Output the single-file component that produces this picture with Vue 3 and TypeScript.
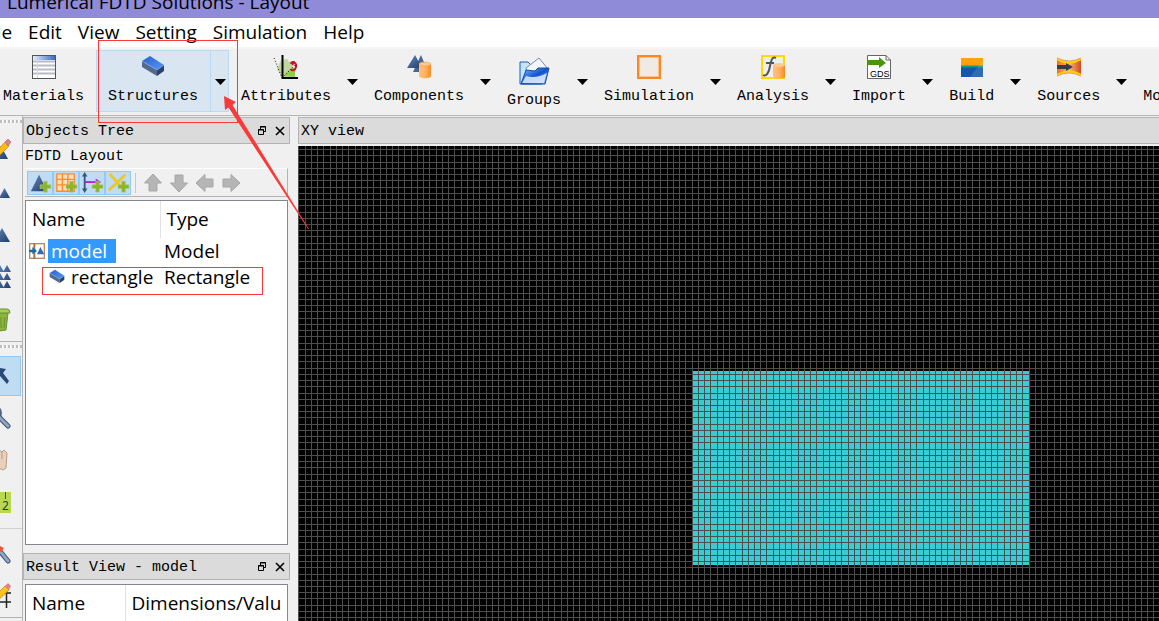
<script setup lang="ts">
interface Tool {
  label: string
  icon: string
  menu: boolean
  active?: boolean
  large?: boolean
}

const menus: string[] = ['File', 'Edit', 'View', 'Setting', 'Simulation', 'Help']

const tools: Tool[] = [
  { label: 'Materials', icon: 'materials', menu: false },
  { label: 'Structures', icon: 'block', menu: true, active: true },
  { label: 'Attributes', icon: 'attributes', menu: true },
  { label: 'Components', icon: 'components', menu: true },
  { label: 'Groups', icon: 'groups', menu: true, large: true },
  { label: 'Simulation', icon: 'simulation', menu: true },
  { label: 'Analysis', icon: 'analysis', menu: true },
  { label: 'Import', icon: 'import', menu: true },
  { label: 'Build', icon: 'build', menu: true },
  { label: 'Sources', icon: 'sources', menu: true },
  { label: 'Monitors', icon: 'simulation', menu: true },
]

const editTools = ['pencil', 'triSmall', 'triLarge', 'array', 'trash']
const viewTools = ['cursor', 'magnifier', 'hand', 'ruler']
const extraTools = ['wand', 'gridEdit']
const addTools = ['addStructure', 'addRegion', 'addMonitor', 'addSource']
const moveTools = [
  { label: 'Move up', turn: 0 },
  { label: 'Move down', turn: 180 },
  { label: 'Move left', turn: 270 },
  { label: 'Move right', turn: 90 },
]

const plus = '<path d="M16 10h4v4h4v4h-4v4h-4v-4h-4v-4h4z" fill="#8db52c" stroke="#b7c97a" stroke-width=".6"/>'

const icons: Record<string, string> = {
  materials:
    '<rect x=".5" y=".5" width="23" height="23" fill="#fff" stroke="#555"/><rect x="1" y="1" width="22" height="4" fill="url(#g-head)"/><path d="M1 6.5h22M1 10.5h22M1 14.5h22M1 18.5h22" stroke="#b9bac8" stroke-width="2"/><path d="M5.5 5v18" stroke="#d5d5df"/>',
  block:
    '<path d="M1 6L9 1 23 10 16 15z" fill="url(#g-blue)"/><path d="M1 6L16 15V21L1 12z" fill="#53688d"/><path d="M16 15L23 10V16L16 21z" fill="#28436e"/><path d="M1 6L16 15L23 10" fill="none" stroke="#8eaad7" stroke-width=".7"/>',
  attributes:
    '<path d="M7 5L13 4 18 10 20 22H8L3 14z" fill="#c2d69c"/><path d="M10 21C14 15 17 12 21 13V22z" fill="#8bcf4c"/><path d="M0 3L8 23L21 10" fill="none" stroke="#111" stroke-dasharray="1 2"/><path d="M8.5 0V23H24" fill="none" stroke="#000" stroke-width="2"/><path d="M17 9C18 5 23 8 22 12C21 16 18 16 17 14" fill="none" stroke="#c51423" stroke-width="2"/><path d="M16 7l5-1-2 5z" fill="#c51423"/>',
  components:
    '<path d="M14 0L21 17H6z" fill="#48658f"/><path d="M8 0L15 13H0z" fill="url(#g-tri)"/><path d="M12 9V21C12 24 24 24 24 21V9z" fill="url(#g-orange)"/><ellipse cx="18" cy="9" rx="6" ry="2" fill="#ffc890" stroke="#e6944b" stroke-width=".5"/>',
  groups:
    '<path d="M2 5H10L13 8H23L24 27H2z" fill="#c5e6ff" stroke="#1e5bb2"/><path d="M8 11L21 1 30 12 26 22H9z" fill="#f3f6ff" stroke="#7588b7"/><path d="M8 13L17 14 20 11H31L27 27H3z" fill="url(#g-folder)" stroke="#174ca8"/><path d="M8 19Q18 22 29 16L26 26H4z" fill="#e2f2ff" opacity=".85"/>',
  simulation:
    '<rect x="1" y="1" width="22" height="22" fill="#f0e9e4" stroke="#ff871f" stroke-width="2"/><rect x="2.5" y="2.5" width="19" height="19" fill="none" stroke="#ffc08b"/>',
  analysis:
    '<rect x="1" y="1" width="22" height="22" fill="#eee" stroke="#ffd900" stroke-width="2"/><path d="M15 3C11 1 10 6 9 11C8 18 5 22 2 20M5 8H13" fill="none" stroke="#555" stroke-width="2"/><path d="M12 10V22C12 24 24 24 24 22V10z" fill="url(#g-orange)"/><ellipse cx="18" cy="10" rx="6" ry="2" fill="#ffc890"/>',
  import:
    '<path d="M.5.5H19L23.5 5V23.5H.5z" fill="#fff" stroke="#666"/><path d="M19 .5V5H23.5" fill="none" stroke="#666"/><path d="M0 5H12V2L19 8 12 13V10H0z" fill="#45970b"/><text x="3" y="22" font-family="Liberation Sans, sans-serif" font-size="9" fill="#000">GDS</text>',
  build:
    '<path d="M1 3H23V11H1z" fill="#ffa00e"/><path d="M1 11H23V22H1z" fill="#1457aa"/><path d="M1 11.5H23" stroke="#0a9a87" stroke-width="2"/><path d="M23 5V22H10z" fill="#fff" opacity=".12"/>',
  sources:
    '<path d="M0 4Q12 10 24 4V20Q12 14 0 20z" fill="url(#g-source)"/><path d="M0 4Q12 11 24 4M0 20Q12 13 24 20" fill="none" stroke="#ffd400" stroke-width="2.500"/><path d="M0 3Q12 9 24 3M0 21Q12 15 24 21" fill="none" stroke="#dd785a" stroke-width=".7"/><path d="M0 10H9V8L16 12 9 16V14H0z" fill="#333e4a"/>',
  pencil:
    '<path d="M14 7L21 20H5z" fill="url(#g-tri)"/><path d="M5 17L18 3 22 7 9 20 4 21z" fill="#ffbd12" stroke="#c08a18" stroke-width=".7"/><path d="M18 3L21 0 24 3 21 7z" fill="#e47e91" stroke="#b7576c" stroke-width=".6"/>',
  triSmall: '<path d="M17.500 7L23 17H12z" fill="url(#g-tri)"/>',
  triLarge: '<path d="M15 5L23 19H7z" fill="url(#g-tri)"/>',
  array:
    '<g fill="url(#g-tri)"><path d="M13 0l4 7H9zM20 0l4 7h-8zM13 8l4 7H9zM20 8l4 7h-8zM13 16l4 7H9zM20 16l4 7h-8z"/></g>',
  trash:
    '<path d="M4 6H21L19 23Q12 25 6 23z" fill="#8db53d" stroke="#6b932c"/><path d="M2 2H20Q23 2 23 6H2z" fill="#a7ce5c" stroke="#6b932c"/><path d="M14 10V21M18 10L17 21" stroke="#688f2a"/>',
  cursor: '<path d="M8 3L19 5 16 9 22 17 20 20 13 12 10 15z" fill="#294a76"/>',
  magnifier:
    '<circle cx="7" cy="7" r="7" fill="#dbe7f5" stroke="#536887" stroke-width="2"/><path d="M12 11L21 20" stroke="#3e5272" stroke-width="5" stroke-linecap="round"/><path d="M12 11L21 20" stroke="#92a6c3" stroke-width="3" stroke-linecap="round"/>',
  hand: '<path d="M8 6L12 2 15 4 17 2 20 5 19 20 16 22 7 18z" fill="#e8d0bb" stroke="#b59d8b"/><path d="M15 4V11" stroke="#b59d8b"/>',
  ruler:
    '<rect x="0" y="2" width="24" height="21" fill="#bad750"/><path d="M18.500 2V9" stroke="#365056"/><text x="15" y="20" font-family="Noto Sans, sans-serif" font-size="12" fill="#263f49">2</text>',
  wand: '<path d="M12 7L21 18" stroke="#3e5272" stroke-width="5" stroke-linecap="round"/><path d="M12 7L21 18" stroke="#92a6c3" stroke-width="3" stroke-linecap="round"/><path d="M13 0L13 3 17 5 14 9 9 6z" fill="#ed552c"/>',
  gridEdit:
    '<path d="M6 8H24M6 17H24M10 3V23M19.500 3V23" stroke="#222" stroke-width="1.500"/><path d="M7 12L18 1 22 5 10 16z" fill="#ffc31a" stroke="#c69521"/><path d="M18 1L21-2 24 1 22 5z" fill="#e47e91"/>',
  addStructure: '<path d="M11 3L20 21H2z" fill="url(#g-tri)"/>' + plus,
  addRegion:
    '<path d="M2 2H21V21H2zM2 8H21M2 14H21M8 2V21M14 2V21" fill="#ffe0bd" stroke="#ff8a2a" stroke-width="1.500"/>' + plus,
  addMonitor:
    '<path d="M4 3V20" stroke="#315983" stroke-width="2"/><path d="M4 0l3 5H1zM4 23l3-5H1z" fill="#315983"/><path d="M4 11H17" stroke="#b51ee0" stroke-width="2"/><path d="M16 7l6 4-6 4z" fill="#b51ee0"/>' + plus,
  addSource: '<path d="M3 2L20 21M2 20L20 3" stroke="#e9c928" stroke-width="3"/>' + plus,
  model:
    '<rect x="1" y="1" width="22" height="22" fill="#fff" stroke="#b58b63" stroke-width="2"/><path d="M8 0V24" stroke="#a6754e" stroke-width="3"/><path d="M0 10H5V6L12 12 5 17V14H0z" fill="#176ba5"/><path d="M17 6L23 17H12z" fill="#3769ae"/>',
}

const gridStep = 6.2415
const lineAt = (start: number, index: number): number => Math.floor(start + gridStep * index)

const verticals: string = Array.from({ length: 420 }, (_, i) => `M${lineAt(0.88, i)} 0h1v2400h-1z`).join('')
const horizontals: string = Array.from({ length: 380 }, (_, i) => `M0 ${lineAt(3.61, i)}h2600v1h-2600z`).join('')
</script>

<template>
  <div class="window">
    <svg class="defs" aria-hidden="true">
      <defs>
        <linearGradient id="g-head"><stop stop-color="#e3edff" /><stop offset="1" stop-color="#386dbd" /></linearGradient>
        <linearGradient id="g-blue" x2="1" y2="1"><stop stop-color="#2860c7" /><stop offset="1" stop-color="#5697ff" /></linearGradient>
        <linearGradient id="g-tri" x2="1" y2="1"><stop stop-color="#6489bd" /><stop offset="1" stop-color="#203c6b" /></linearGradient>
        <linearGradient id="g-orange"><stop stop-color="#ffc17c" /><stop offset=".5" stop-color="#ffb366" /><stop offset="1" stop-color="#f58e1d" /></linearGradient>
        <linearGradient id="g-folder" x2="1" y2="1"><stop stop-color="#7ec3ff" /><stop offset=".5" stop-color="#1452cf" /><stop offset="1" stop-color="#6fb5fa" /></linearGradient>
        <linearGradient id="g-source"><stop stop-color="#f26a21" /><stop offset=".5" stop-color="#f9b878" /><stop offset="1" stop-color="#d5481b" /></linearGradient>
      </defs>
    </svg>

    <header class="titlebar"><span>Lumerical FDTD Solutions - Layout</span></header>
    <nav class="menubar">
      <button v-for="m in menus" :key="m" type="button">{{ m }}</button>
    </nav>

    <div class="toolbar">
      <div v-for="t in tools" :key="t.label" class="tool" :class="{ active: t.active, large: t.large }">
        <button type="button" class="main">
          <svg class="icon" :viewBox="t.large ? '0 0 32 30' : '0 0 24 24'" aria-hidden="true" v-html="icons[t.icon]" />
          <span>{{ t.label }}</span>
        </button>
        <button v-if="t.menu" type="button" class="drop" :aria-label="t.label + ' menu'">
          <svg viewBox="0 0 11 6" aria-hidden="true"><path d="M0 0H11L5.500 6z" /></svg>
        </button>
      </div>
    </div>

    <div class="body">
      <aside class="side">
        <div class="grip"></div>
        <div class="group">
          <button v-for="n in editTools" :key="n" type="button" :aria-label="n">
            <svg viewBox="0 0 24 24" aria-hidden="true" v-html="icons[n]" />
          </button>
        </div>
        <div class="grip second"></div>
        <div class="group">
          <button v-for="n in viewTools" :key="n" type="button" :aria-label="n" :class="{ on: n === 'cursor' }">
            <svg viewBox="0 0 24 24" aria-hidden="true" v-html="icons[n]" />
          </button>
        </div>
        <div class="rule"></div>
        <div class="group">
          <button v-for="n in extraTools" :key="n" type="button" :aria-label="n">
            <svg viewBox="0 0 24 24" aria-hidden="true" v-html="icons[n]" />
          </button>
        </div>
        <div class="end"></div>
      </aside>

      <section class="docks">
        <div class="dockhead">
          <h2>Objects Tree</h2>
          <button type="button" aria-label="Float"><svg viewBox="0 0 10 10" aria-hidden="true"><path d="M3.500 3V.500H8.500V5.500H7M1.500 3.500H6.500V8.500H1.500z" /><path d="M3 1H9M1 4H7" /></svg></button>
          <button type="button" aria-label="Close"><svg viewBox="0 0 10 10" aria-hidden="true"><path d="M1 1L9 9M9 1L1 9" stroke-width="1.600" /></svg></button>
        </div>
        <p class="path">FDTD Layout</p>
        <div class="treebar">
          <button v-for="n in addTools" :key="n" type="button" class="add" :aria-label="n">
            <svg viewBox="0 0 24 24" aria-hidden="true" v-html="icons[n]" />
          </button>
          <i class="split"></i>
          <button v-for="a in moveTools" :key="a.label" type="button" class="move" :aria-label="a.label">
            <svg viewBox="0 0 20 20" aria-hidden="true">
              <path :transform="`rotate(${a.turn} 10 10)`" d="M10 1L18.500 10H14V18H6V10H1.500z" fill="#b5b5b5" stroke="#a6a6a6" />
            </svg>
          </button>
        </div>
        <div class="tree">
          <table>
            <thead>
              <tr><th>Name</th><th>Type</th></tr>
            </thead>
            <tbody>
              <tr>
                <td><div class="node"><svg viewBox="0 0 24 24" aria-hidden="true" v-html="icons.model" /><span class="picked">model</span></div></td>
                <td>Model</td>
              </tr>
              <tr class="child">
                <td><div class="node"><svg viewBox="0 0 24 24" aria-hidden="true" v-html="icons.block" /><span>rectangle</span></div></td>
                <td>Rectangle</td>
              </tr>
            </tbody>
          </table>
          <div class="rowmark"></div>
        </div>
        <div class="dockhead">
          <h2>Result View - model</h2>
          <button type="button" aria-label="Float"><svg viewBox="0 0 10 10" aria-hidden="true"><path d="M3.500 3V.500H8.500V5.500H7M1.500 3.500H6.500V8.500H1.500z" /><path d="M3 1H9M1 4H7" /></svg></button>
          <button type="button" aria-label="Close"><svg viewBox="0 0 10 10" aria-hidden="true"><path d="M1 1L9 9M9 1L1 9" stroke-width="1.600" /></svg></button>
        </div>
        <div class="results">
          <table>
            <thead>
              <tr><th>Name</th><th><div class="clip">Dimensions/Value</div></th></tr>
            </thead>
          </table>
        </div>
      </section>

      <main class="view">
        <div class="dockhead"><h2>XY view</h2></div>
        <div class="canvas">
          <svg aria-label="XY view" shape-rendering="crispEdges">
            <rect x="395" y="225" width="336" height="194" fill="#39ccd3" />
            <path :d="verticals" fill="#4e4e4e" />
            <path :d="horizontals" fill="#4e4e4e" />
          </svg>
        </div>
      </main>
    </div>

    <svg class="notes" aria-hidden="true">
      <rect x="98.500" y="40.500" width="139" height="82" fill="none" stroke="#f83a3a" />
      <path d="M224 96L236 102 232.500 105 309 229 308 229 228.500 107.500 225 110z" fill="#f83a3a" />
    </svg>
  </div>
</template>

<style>
body {
  margin: 0;
  overflow: hidden;
}
</style>

<style scoped>
.window {
  position: relative;
  display: flex;
  flex-direction: column;
  height: 100vh;
  overflow: hidden;
  background: #f0f0f0;
  color: #000;
  font: 19px/26px "Open Sans", "Noto Sans", sans-serif;
}
.window * {
  box-sizing: border-box;
}
button {
  margin: 0;
  padding: 0;
  border: 0;
  background: none;
  color: inherit;
  font: inherit;
}
svg {
  display: block;
  overflow: visible;
}
.defs {
  position: absolute;
  width: 0;
  height: 0;
}
.titlebar {
  display: flex;
  align-items: flex-end;
  flex: none;
  height: 18px;
  padding: 0 7px 3px;
  overflow: hidden;
  background: #8f8bd8;
  white-space: nowrap;
}
.menubar {
  display: flex;
  flex: none;
  gap: 16px;
  height: 31px;
  margin-left: -18px;
  padding-bottom: 2px;
  border-bottom: 2px solid #f6f6f6;
  background: #fff;
}
.toolbar {
  display: flex;
  flex: none;
  height: 67px;
  margin-left: -9px;
  padding: 1px 0 3px;
  border-bottom: 1px solid #b4b4b4;
  font: 15px/20px "Liberation Mono", monospace;
}
.tool {
  display: flex;
  flex: none;
}
.main {
  display: flex;
  flex-direction: column;
  align-items: center;
  padding: 5px 12px 0;
}
.icon {
  width: 24px;
  height: 24px;
  margin-bottom: 8px;
}
.large .icon {
  width: 32px;
  height: 30px;
  margin-bottom: 4px;
}
.large .main {
  padding-top: 7px;
}
.drop {
  display: flex;
  align-items: center;
  justify-content: center;
  width: 19px;
  padding-top: 2px;
}
.drop svg {
  width: 11px;
  height: 6px;
}
.active {
  background: #d9e6f1;
  box-shadow: inset 0 0 0 1px #b8dbf5;
}
.active .drop {
  border-left: 1px solid #b8dbf5;
}
.body {
  display: flex;
  flex: 1;
  min-height: 0;
}
.side {
  display: flex;
  flex: none;
  flex-direction: column;
  align-items: flex-end;
  width: 23px;
  overflow: hidden;
  border-right: 1px solid #b4b4b4;
}
.grip {
  flex: none;
  width: 100%;
  height: 3px;
  margin: 4px 0 8px;
  background: repeating-linear-gradient(90deg, #bdbdbd 0 2px, #fff 2px 3px, #f0f0f0 3px 4px);
}
.group {
  display: flex;
  flex: none;
  flex-direction: column;
  gap: 2px;
}
.group button {
  display: flex;
  align-items: center;
  justify-content: center;
  width: 44px;
  height: 40px;
  margin-right: 1px;
}
.group svg {
  width: 24px;
  height: 24px;
}
.group .on {
  border: 1px solid #91c9f7;
  background: #c0dcf3;
}
.second {
  height: 9px;
  margin: 2px 0 6px;
  padding: 3px 0 2px;
  border-top: 1px solid #b4b4b4;
  background-clip: content-box;
}
.rule {
  flex: none;
  width: 100%;
  height: 1px;
  margin: 6px 0;
  background: #cfcfcf;
}
.end {
  flex: none;
  width: 100%;
  height: 1px;
  background: #b4b4b4;
}
.docks {
  display: flex;
  flex: none;
  flex-direction: column;
  width: 267px;
  margin: 1px 8px 0 0;
}
.dockhead {
  display: flex;
  flex: none;
  align-items: center;
  gap: 8px;
  height: 27px;
  padding: 0 4px 0 2px;
  border: 1px solid #b4b4b4;
  background: #dbdbdb;
}
.dockhead h2 {
  flex: 1;
  margin: 0;
  padding-top: 2px;
  font: 15px/20px "Liberation Mono", monospace;
}
.dockhead button svg {
  width: 10px;
  height: 10px;
  fill: none;
  stroke: #000;
}
.path {
  flex: none;
  margin: 3px 0 2px 2px;
  font: 15px/20px "Liberation Mono", monospace;
}
.treebar {
  display: flex;
  flex: none;
  align-items: center;
  height: 29px;
  margin: -1px 2px 3px;
  padding-left: 2px;
  border-top: 1px solid #fff;
  border-right: 1px solid #b4b4b4;
  border-bottom: 1px solid #b4b4b4;
}
.add {
  display: flex;
  align-items: center;
  justify-content: center;
  width: 26px;
  height: 24px;
  border: 1px solid #91c9f7;
  background: #c0dcf3;
}
.add svg {
  width: 22px;
  height: 22px;
}
.split {
  width: 1px;
  height: 20px;
  margin: 0 4px;
  background: #c8c8c8;
}
.move {
  display: flex;
  justify-content: center;
  width: 26px;
}
.move svg {
  width: 20px;
  height: 20px;
}
.tree,
.results {
  position: relative;
  margin: 0 2px;
  border: 1px solid #828790;
  background: #fff;
}
.tree {
  flex: 1;
  min-height: 120px;
  margin-bottom: 8px;
}
.results {
  flex: none;
  height: 37px;
  margin-top: 4px;
  border-bottom: 0;
}
table {
  width: 100%;
  border-collapse: collapse;
  table-layout: fixed;
}
th,
td {
  padding: 0;
  font-weight: 400;
  text-align: left;
  white-space: nowrap;
}
th {
  height: 37px;
  padding: 0 0 2px 6px;
}
th:first-child {
  width: 134px;
  border-right: 1px solid #e2e2e2;
}
.results th:first-child {
  width: 99px;
}
.clip {
  margin-right: 6px;
  overflow: hidden;
}
td {
  height: 26px;
  padding-left: 4px;
}
td:first-child {
  padding-left: 3px;
}
.node {
  display: flex;
  align-items: center;
  gap: 3px;
  line-height: 24px;
}
.node svg {
  width: 16px;
  height: 16px;
}
.picked {
  padding: 0 9px 0 3px;
  background: #3399ff;
  color: #fff;
}
.child .node {
  gap: 6px;
  padding-left: 20px;
}
.rowmark {
  position: absolute;
  top: 66px;
  left: 16px;
  width: 221px;
  height: 28px;
  border: 1px solid #f83a3a;
}
.view {
  display: flex;
  flex: 1;
  flex-direction: column;
  min-width: 0;
  margin-top: 1px;
}
.view .dockhead {
  border-right: 0;
}
.canvas {
  flex: 1;
  min-height: 0;
  margin-top: 2px;
  overflow: hidden;
  background: #000;
}
.canvas svg {
  width: 100%;
  height: 100%;
  overflow: hidden;
}
.notes {
  position: absolute;
  inset: 0;
  width: 100%;
  height: 100%;
  pointer-events: none;
}
</style>
